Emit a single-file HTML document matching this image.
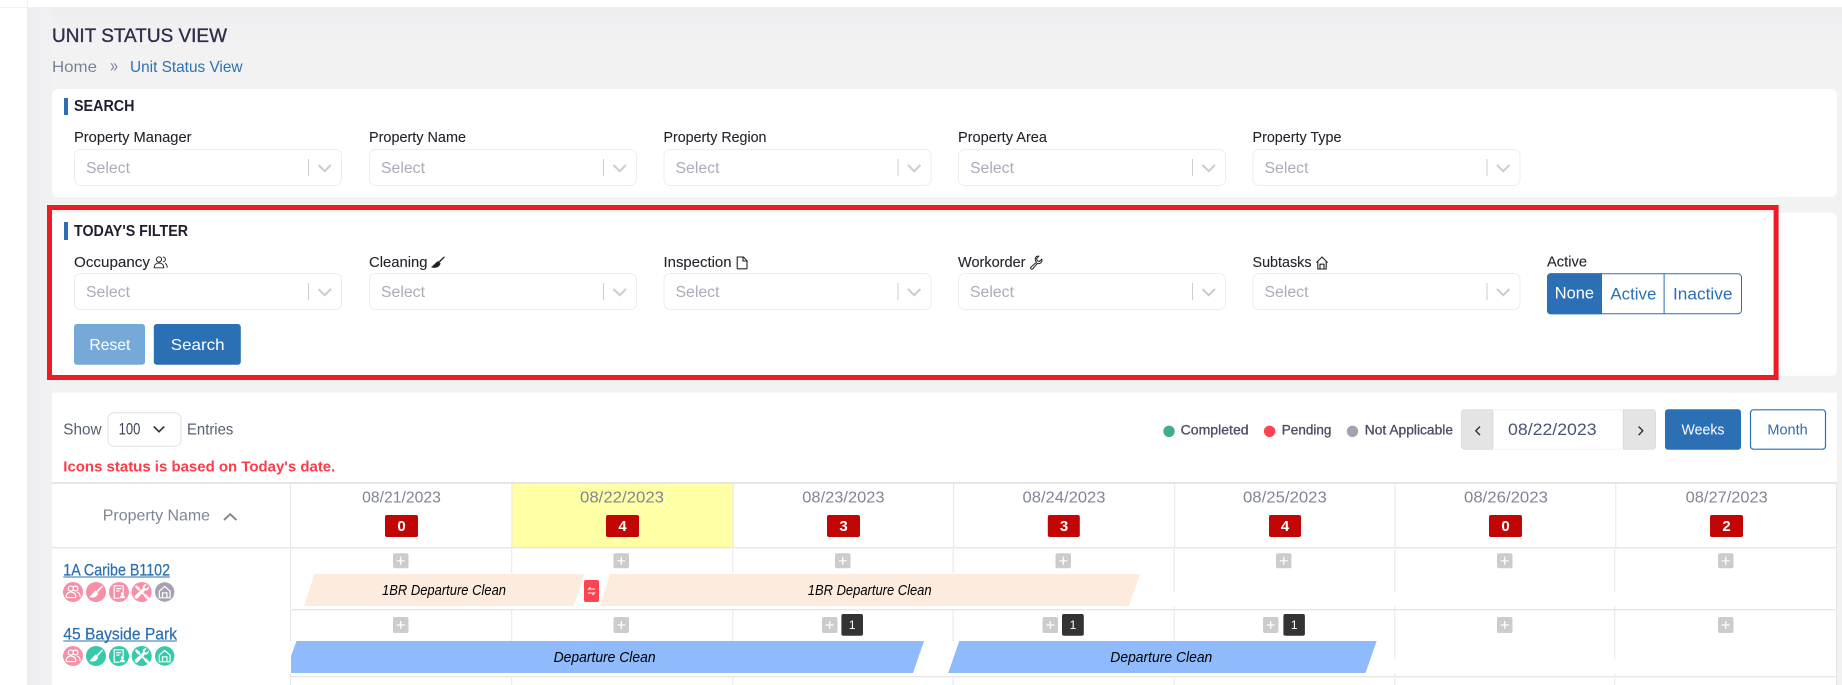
<!DOCTYPE html>
<html lang="en">
<head>
<meta charset="utf-8">
<title>Unit Status View</title>
<style>
html,body{margin:0;padding:0;background:#fff;width:1842px;height:685px;overflow:hidden}
svg{display:block}
text{font-family:"Liberation Sans",sans-serif;white-space:pre}
.m{stroke-width:.35;paint-order:stroke}
.sb{font-weight:bold}
.lab{font-size:15px;fill:#23232b;stroke:#23232b;stroke-width:.1}
.ph{font-size:15.5px;fill:#aeaabb}
.date{font-size:15.5px;fill:#7f8596}
.bd{font-size:15px;fill:#fff;font-weight:bold;text-anchor:middle}
.ev{font-size:14.5px;font-style:italic;fill:#000}
.lg{font-size:13.5px;fill:#4b4b63;stroke:#4b4b63;stroke-width:.3}
.lk{font-size:17px;fill:#2b6fb5;stroke:#2b6fb5;stroke-width:.25}
</style>
</head>
<body>
<svg xmlns="http://www.w3.org/2000/svg" width="1842" height="685" viewBox="0 0 1842 685">
<defs>
<linearGradient id="gt" x1="0" y1="0" x2="0" y2="1"><stop offset="0" stop-color="#eeeef1"/><stop offset="1" stop-color="#f2f2f2"/></linearGradient>
<linearGradient id="gl" x1="0" y1="0" x2="1" y2="0"><stop offset="0" stop-color="#edeef2"/><stop offset="1" stop-color="#f1f1f3"/></linearGradient>
<g id="sel">
<rect x=".5" y=".5" width="267" height="36" rx="6" fill="#fff" stroke="#eceDf3"/>
<rect x="234" y="10" width="1" height="17" fill="#ccc"/>
<path d="M244.5 16l6.2 6.2 6.2-6.2" fill="none" stroke="#ccc" stroke-width="2"/>
</g>
<g id="plus"><rect width="15.5" height="15" rx="2" fill="#ccc"/><path d="M7.75 3.5v8M3.75 7.5h8" stroke="#fff" stroke-width="1.2"/></g>
<g id="plus2"><rect width="15.5" height="16" rx="2" fill="#ccc"/><path d="M7.75 4v8M3.75 8h8" stroke="#fff" stroke-width="1.2"/></g>
<g id="i-people" fill="none" stroke="#fff" stroke-width="1.15">
<circle cx="7.8" cy="6.6" r="2.5"/><circle cx="12.6" cy="6.4" r="2.4"/>
<path d="M3 15.6c0-3.6 2.2-5.6 5-5.6s5 2 5 5.6M3 15.6h10M13.8 10c2 .4 3.4 2 3.4 5.2"/>
</g>
<g id="i-broom" fill="#fff">
<path d="M16 3.6l1 1-5.6 6-1.2-1.2z"/>
<path d="M9.8 8.6c-2.2.8-3 3.6-6.4 6.2 3.2 1.6 7.6.8 8.8-3.4z"/>
</g>
<g id="i-doc" fill="none" stroke="#fff" stroke-width="1.2">
<path d="M14.2 10V3.8H5.2v12.4h5.4"/>
<path d="M7.2 6.6h5M7.2 9h3.4"/>
<circle cx="13.4" cy="11.6" r="1.5" fill="#fff" stroke="none"/>
<path d="M10.8 16.2c0-2 1.2-3 2.6-3s2.6 1 2.6 3z" fill="#fff" stroke="none"/>
</g>
<g id="i-tools" fill="#fff">
<path d="M3.2 4.6L4.6 3.2 8 5.8 8.6 8 16.8 15 15 16.8 8 8.6 5.8 8z"/>
<path d="M12.4 14.4l2-2 3.2 3.2a1.4 1.4 0 0 1-2 2z"/>
<path d="M17 4.2l-2.4 2.4-1.4-.4-.4-1.4 2.4-2.4c-2.4-.8-4.8 1.4-4 3.8l-8 7.6a1.9 1.9 0 0 0 2.6 2.6l7.6-8c2.4.8 4.4-1.8 3.6-4.2z"/>
</g>
<g id="i-house" fill="none" stroke="#fff" stroke-width="1.2">
<path d="M4.6 9.2L10 4.4l5.4 4.8v6.6H4.6z"/><path d="M7.8 15.8v-5h4.4v5"/>
</g>
</defs>

<!-- shell -->
<rect width="1842" height="685" fill="#fff"/>
<rect x="27" y="7" width="1815" height="678" fill="#f2f2f2"/>
<rect x="27" y="7" width="1815" height="40" fill="url(#gt)"/>
<rect x="27" y="7" width="25" height="678" fill="url(#gl)"/>
<rect x="27" y="0" width="1" height="7" fill="#f0f0f0"/>
<rect x="0" y="7" width="27" height="1" fill="#f2f2f2"/>

<!-- heading -->
<text x="52" y="42" font-size="19.5" fill="#2e2e4a" stroke="#2e2e4a" class="m" textLength="175" lengthAdjust="spacingAndGlyphs">UNIT STATUS VIEW</text>
<text x="52" y="72" font-size="16" fill="#7b8398" textLength="45" lengthAdjust="spacingAndGlyphs">Home</text>
<text x="110" y="72" font-size="18" fill="#7b8398" textLength="8" lengthAdjust="spacingAndGlyphs">»</text>
<text x="130" y="72" font-size="16" fill="#2d70b5" textLength="112.5" lengthAdjust="spacingAndGlyphs">Unit Status View</text>

<!-- search card -->
<rect x="52" y="89" width="1785" height="108" rx="6" fill="#fff"/>
<rect x="64" y="98" width="4" height="17" fill="#2b6fb5"/>
<text x="74" y="111" font-size="15.5" class="sb" fill="#1e1e2e" textLength="60.5" lengthAdjust="spacingAndGlyphs">SEARCH</text>
<text x="74" y="142" class="lab" textLength="117.5" lengthAdjust="spacingAndGlyphs">Property Manager</text>
<text x="369" y="142" class="lab" textLength="97" lengthAdjust="spacingAndGlyphs">Property Name</text>
<text x="663.5" y="142" class="lab" textLength="103" lengthAdjust="spacingAndGlyphs">Property Region</text>
<text x="958" y="142" class="lab" textLength="89" lengthAdjust="spacingAndGlyphs">Property Area</text>
<text x="1252.5" y="142" class="lab" textLength="89" lengthAdjust="spacingAndGlyphs">Property Type</text>
<use href="#sel" x="74" y="149"/>
<use href="#sel" x="369" y="149"/>
<use href="#sel" x="663.5" y="149"/>
<use href="#sel" x="958" y="149"/>
<use href="#sel" x="1252.5" y="149"/>
<text x="86" y="173" class="ph" textLength="44" lengthAdjust="spacingAndGlyphs">Select</text>
<text x="381" y="173" class="ph" textLength="44" lengthAdjust="spacingAndGlyphs">Select</text>
<text x="675.5" y="173" class="ph" textLength="44" lengthAdjust="spacingAndGlyphs">Select</text>
<text x="970" y="173" class="ph" textLength="44" lengthAdjust="spacingAndGlyphs">Select</text>
<text x="1264.5" y="173" class="ph" textLength="44" lengthAdjust="spacingAndGlyphs">Select</text>

<!-- filter card -->
<rect x="52" y="212.7" width="1785" height="163" rx="6" fill="#fff"/>
<rect x="64" y="222" width="4" height="18" fill="#2b6fb5"/>
<text x="74" y="236" font-size="15.5" class="sb" fill="#1e1e2e" textLength="114" lengthAdjust="spacingAndGlyphs">TODAY'S FILTER</text>

<text x="74" y="267" class="lab" textLength="76" lengthAdjust="spacingAndGlyphs">Occupancy</text>
<g fill="none" stroke="#222" stroke-width=".95">
<circle cx="159" cy="259.4" r="2.6"/><path d="M163 257a2.4 2.4 0 0 1 0 4.8"/>
<path d="M154.2 267.8c0-3.2 2-4.8 4.8-4.8s4.8 1.6 4.8 4.8zM165 263.4c1.4.4 2.2 1.8 2.2 4.4"/>
</g>
<text x="369" y="267" class="lab" textLength="58.5" lengthAdjust="spacingAndGlyphs">Cleaning</text>
<g fill="#222">
<path d="M444 256.4l.8.8-4.8 5-1.2-1z"/>
<path d="M438.4 261c-2 .6-3.8 3.6-7.4 6 3.6 1.8 8.4.8 9.6-3.6z"/>
</g>
<text x="663.5" y="267" class="lab" textLength="68" lengthAdjust="spacingAndGlyphs">Inspection</text>
<path d="M737.2 257h6.2l3.6 3.8v7.4a.6.6 0 0 1-.6.6h-8.6a.6.6 0 0 1-.6-.6zM743 257.2v3.8h3.8" fill="none" stroke="#222" stroke-width="1.1"/>
<text x="958" y="267" class="lab" textLength="67.5" lengthAdjust="spacingAndGlyphs">Workorder</text>
<path d="M1036.4 262.4l-5.6 4.8a1.3 1.3 0 0 0 1.8 1.8l4.8-5.6c2.8 1 5.2-1.6 4.4-4.2l-2.4 2.2-2.2-.6-.6-2.2 2.2-2.4c-2.8-.6-4.8 2.2-2.4 6.2z" fill="none" stroke="#222" stroke-width="1"/>
<text x="1252.5" y="267" class="lab" textLength="59" lengthAdjust="spacingAndGlyphs">Subtasks</text>
<path d="M1316.4 262.6l5.6-5.6 5.6 5.6M1317.8 261.4v7.6h8.4v-7.6M1320 269v-4.8h4v4.8" fill="none" stroke="#222" stroke-width="1.1"/>
<text x="1547" y="266.5" class="lab" textLength="40" lengthAdjust="spacingAndGlyphs">Active</text>

<use href="#sel" x="74" y="273"/>
<use href="#sel" x="369" y="273"/>
<use href="#sel" x="663.5" y="273"/>
<use href="#sel" x="958" y="273"/>
<use href="#sel" x="1252.5" y="273"/>
<text x="86" y="297" class="ph" textLength="44" lengthAdjust="spacingAndGlyphs">Select</text>
<text x="381" y="297" class="ph" textLength="44" lengthAdjust="spacingAndGlyphs">Select</text>
<text x="675.5" y="297" class="ph" textLength="44" lengthAdjust="spacingAndGlyphs">Select</text>
<text x="970" y="297" class="ph" textLength="44" lengthAdjust="spacingAndGlyphs">Select</text>
<text x="1264.5" y="297" class="ph" textLength="44" lengthAdjust="spacingAndGlyphs">Select</text>

<!-- active group -->
<rect x="1547.5" y="273.8" width="194" height="40" rx="3.5" fill="#fff" stroke="#2b6fb5"/>
<path d="M1550.5 273.3H1602v41h-51.5a3.5 3.5 0 0 1-3.5-3.5v-34a3.5 3.5 0 0 1 3.5-3.5z" fill="#2b6fb5"/>
<rect x="1663.6" y="273.5" width="1" height="40.5" fill="#2b6fb5"/>
<text x="1554.8" y="298.5" font-size="16.5" fill="#fff" textLength="39.2" lengthAdjust="spacingAndGlyphs">None</text>
<text x="1610.4" y="299.5" font-size="16.5" fill="#2b6fb5" textLength="46" lengthAdjust="spacingAndGlyphs">Active</text>
<text x="1673" y="299.5" font-size="16.5" fill="#2b6fb5" textLength="59.5" lengthAdjust="spacingAndGlyphs">Inactive</text>

<!-- buttons -->
<rect x="74" y="324" width="71" height="40.7" rx="3" fill="#74a9d8"/>
<text x="89.4" y="350" font-size="16" fill="#fff" textLength="41" lengthAdjust="spacingAndGlyphs">Reset</text>
<rect x="153.8" y="324" width="87" height="40.7" rx="3" fill="#2b6fb5"/>
<text x="170.8" y="350" font-size="16" fill="#fff" textLength="53.8" lengthAdjust="spacingAndGlyphs">Search</text>

<!-- red highlight -->
<rect x="49.5" y="207.5" width="1726.6" height="170" fill="none" stroke="#ed1c24" stroke-width="5"/>

<!-- table card -->
<rect x="52" y="392.7" width="1785" height="293" fill="#fff"/>

<text x="63.3" y="434.3" font-size="16" fill="#565e70" textLength="38.3" lengthAdjust="spacingAndGlyphs">Show</text>
<rect x="108" y="412.8" width="73" height="33.4" rx="6" fill="#fff" stroke="#dedfe3"/>
<text x="118.6" y="434.5" font-size="16.5" fill="#3c4357" textLength="21.8" lengthAdjust="spacingAndGlyphs">100</text>
<path d="M153.8 426.5l5.2 5.2 5.2-5.2" fill="none" stroke="#333" stroke-width="1.6"/>
<text x="187" y="434.3" font-size="16" fill="#565e70" textLength="46.3" lengthAdjust="spacingAndGlyphs">Entries</text>
<text x="63.3" y="471.3" font-size="15" class="sb" fill="#ff3b47" textLength="272" lengthAdjust="spacingAndGlyphs">Icons status is based on Today's date.</text>

<!-- legend & date nav -->
<circle cx="1169" cy="431.3" r="5.7" fill="#3fae8e"/>
<text x="1180.6" y="434.3" class="lg" textLength="68" lengthAdjust="spacingAndGlyphs">Completed</text>
<circle cx="1269.6" cy="431.3" r="5.7" fill="#ff4350"/>
<text x="1281.8" y="434.3" class="lg" textLength="49.6" lengthAdjust="spacingAndGlyphs">Pending</text>
<circle cx="1352.5" cy="431.3" r="5.7" fill="#a5a1b1"/>
<text x="1364.8" y="434.3" class="lg" textLength="88.2" lengthAdjust="spacingAndGlyphs">Not Applicable</text>

<path d="M1464.5 409.8h28v39.4h-28a3 3 0 0 1-3-3v-33.4a3 3 0 0 1 3-3z" fill="#e4e4e4" stroke="#dcdcdc"/>
<rect x="1493.5" y="409.8" width="129.5" height="39.4" rx="3" fill="#fff" stroke="#f0f0f0"/>
<path d="M1623.5 409.8h29a3 3 0 0 1 3 3v33.4a3 3 0 0 1-3 3h-29z" fill="#e4e4e4" stroke="#dcdcdc"/>
<path d="M1480 426.5l-4.2 4.3 4.2 4.3" fill="none" stroke="#333" stroke-width="1.4"/>
<path d="M1638.6 426.5l4.2 4.3-4.2 4.3" fill="none" stroke="#333" stroke-width="1.4"/>
<text x="1508" y="435" font-size="17" fill="#4a5572" textLength="88.6" lengthAdjust="spacingAndGlyphs">08/22/2023</text>
<rect x="1665" y="409.3" width="76" height="40.4" rx="3" fill="#2b6fb5"/>
<text x="1681.5" y="434.3" font-size="14.5" fill="#fff" class="m" textLength="43" lengthAdjust="spacingAndGlyphs">Weeks</text>
<rect x="1750.5" y="409.8" width="75" height="39.4" rx="3" fill="#fff" stroke="#2b6fb5" stroke-width="1.2"/>
<text x="1767.4" y="434.3" font-size="14.5" fill="#2b6fb5" textLength="40.3" lengthAdjust="spacingAndGlyphs">Month</text>

<!-- table header -->
<rect x="52" y="482" width="1785" height="2" fill="#e6e6e6"/>
<rect x="512" y="484" width="220.5" height="63" fill="#ffffa5"/>
<g fill="#e6e6e6">
<rect x="290" y="484" width="1" height="63"/>
<rect x="511.4" y="484" width="1" height="63"/>
<rect x="732.6" y="484" width="1" height="63"/>
<rect x="953.2" y="484" width="1" height="63"/>
<rect x="1174.2" y="484" width="1" height="63"/>
<rect x="1394.6" y="484" width="1" height="63"/>
<rect x="1615.3" y="484" width="1" height="63"/>
<rect x="1836" y="484" width="1" height="201"/>
<rect x="52" y="547" width="1785" height="1.4"/>
<rect x="291" y="609" width="1546" height="1.4"/>
<rect x="291" y="676" width="1546" height="1.4"/>
<!-- row verticals -->
<rect x="290" y="549" width="1" height="60"/><rect x="290" y="610" width="1" height="32"/><rect x="290" y="674" width="1" height="11"/>
<rect x="511.2" y="549" width="1" height="24"/><rect x="511.2" y="610" width="1" height="31"/><rect x="511.2" y="678" width="1" height="7"/>
<rect x="732.3" y="549" width="1" height="24"/><rect x="732.3" y="610" width="1" height="31"/><rect x="732.3" y="678" width="1" height="7"/>
<rect x="952.6" y="549" width="1" height="24"/><rect x="952.6" y="610" width="1" height="31"/><rect x="952.6" y="678" width="1" height="7"/>
<rect x="1173.6" y="549" width="1" height="43.5"/><rect x="1173.6" y="606.5" width="1" height="2.5"/><rect x="1173.6" y="610" width="1" height="31"/><rect x="1173.6" y="678" width="1" height="7"/>
<rect x="1394.3" y="549" width="1" height="43.5"/><rect x="1394.3" y="606.5" width="1" height="2.5"/><rect x="1394.3" y="610" width="1" height="49.5"/><rect x="1394.3" y="673.5" width="1" height="2.5"/><rect x="1394.3" y="678" width="1" height="7"/>
<rect x="1614.3" y="549" width="1" height="43.5"/><rect x="1614.3" y="606.5" width="1" height="2.5"/><rect x="1614.3" y="610" width="1" height="49.5"/><rect x="1614.3" y="673.5" width="1" height="2.5"/><rect x="1614.3" y="678" width="1" height="7"/>
</g>

<text x="102.8" y="520.3" font-size="16" fill="#7f8596" textLength="107.2" lengthAdjust="spacingAndGlyphs">Property Name</text>
<path d="M224 520l6.2-5.8 6.2 5.8" fill="none" stroke="#7f8596" stroke-width="1.9"/>

<text x="362.2" y="502.3" class="date" textLength="78.7" lengthAdjust="spacingAndGlyphs">08/21/2023</text>
<text x="580" y="502.3" class="date" textLength="84" lengthAdjust="spacingAndGlyphs">08/22/2023</text>
<text x="802.3" y="502.3" class="date" textLength="82.2" lengthAdjust="spacingAndGlyphs">08/23/2023</text>
<text x="1022.5" y="502.3" class="date" textLength="83" lengthAdjust="spacingAndGlyphs">08/24/2023</text>
<text x="1243" y="502.3" class="date" textLength="83.8" lengthAdjust="spacingAndGlyphs">08/25/2023</text>
<text x="1464" y="502.3" class="date" textLength="83.9" lengthAdjust="spacingAndGlyphs">08/26/2023</text>
<text x="1685.7" y="502.3" class="date" textLength="82.1" lengthAdjust="spacingAndGlyphs">08/27/2023</text>

<g fill="#c20606">
<rect x="385" y="515" width="33" height="22" rx="2"/>
<rect x="606" y="515" width="33" height="22" rx="2"/>
<rect x="827" y="515" width="33" height="22" rx="2"/>
<rect x="1047.8" y="515" width="32" height="22" rx="2"/>
<rect x="1269" y="515" width="32" height="22" rx="2"/>
<rect x="1489" y="515" width="33" height="22" rx="2"/>
<rect x="1710" y="515" width="33" height="22" rx="2"/>
</g>
<text x="401.5" y="531" class="bd">0</text>
<text x="622.5" y="531" class="bd">4</text>
<text x="843.5" y="531" class="bd">3</text>
<text x="1064" y="531" class="bd">3</text>
<text x="1285" y="531" class="bd">4</text>
<text x="1505.5" y="531" class="bd">0</text>
<text x="1726.5" y="531" class="bd">2</text>

<!-- row names -->
<text x="63.3" y="575.3" class="lk" textLength="106.7" lengthAdjust="spacingAndGlyphs">1A Caribe B1102</text>
<rect x="63.3" y="576.5" width="106.7" height="1" fill="#2b6fb5"/>
<text x="63.3" y="639.3" class="lk" textLength="113.7" lengthAdjust="spacingAndGlyphs">45 Bayside Park</text>
<rect x="63.3" y="640.5" width="113.7" height="1" fill="#2b6fb5"/>

<circle cx="73" cy="592" r="10" fill="#f78fa7"/><use href="#i-people" x="63" y="582"/>
<circle cx="96" cy="592" r="10" fill="#f78fa7"/><use href="#i-broom" x="86" y="582"/>
<circle cx="119" cy="592" r="10" fill="#f78fa7"/><use href="#i-doc" x="109" y="582"/>
<circle cx="141.7" cy="592" r="10" fill="#f78fa7"/><use href="#i-tools" x="131.7" y="582"/>
<circle cx="164.7" cy="592" r="9.7" fill="#a5a1b1"/><use href="#i-house" x="154.7" y="582"/>

<circle cx="73" cy="656" r="10" fill="#f78fa7"/><use href="#i-people" x="63" y="646"/>
<circle cx="96" cy="656" r="10" fill="#38c9ab"/><use href="#i-broom" x="86" y="646"/>
<circle cx="119" cy="656" r="10" fill="#38c9ab"/><use href="#i-doc" x="109" y="646"/>
<circle cx="141.7" cy="656" r="10" fill="#38c9ab"/><use href="#i-tools" x="131.7" y="646"/>
<circle cx="164.7" cy="656" r="9.7" fill="#38c9ab"/><use href="#i-house" x="154.7" y="646"/>

<!-- plus buttons -->
<use href="#plus" x="393" y="553.3"/>
<use href="#plus" x="613.5" y="553.3"/>
<use href="#plus" x="835" y="553.3"/>
<use href="#plus" x="1055.5" y="553.3"/>
<use href="#plus" x="1276" y="553.3"/>
<use href="#plus" x="1497" y="553.3"/>
<use href="#plus" x="1718" y="553.3"/>
<use href="#plus2" x="393" y="617"/>
<use href="#plus2" x="613.5" y="617"/>
<use href="#plus2" x="822" y="617"/>
<use href="#plus2" x="1042.5" y="617"/>
<use href="#plus2" x="1263" y="617"/>
<use href="#plus2" x="1497" y="617"/>
<use href="#plus2" x="1718" y="617"/>

<g fill="#333">
<rect x="841.4" y="614" width="21.6" height="21.7" rx="2"/>
<rect x="1062" y="614" width="21.8" height="21.7" rx="2"/>
<rect x="1283.4" y="614" width="21.5" height="21.7" rx="2"/>
</g>
<g font-size="12" fill="#fff" text-anchor="middle">
<text x="852.2" y="629">1</text>
<text x="1073" y="629">1</text>
<text x="1294.2" y="629">1</text>
</g>

<!-- events -->
<polygon points="314.4,574 584.4,574 573.8,606 304,606" fill="#fdebdd"/>
<text x="382" y="594.8" class="ev" textLength="124" lengthAdjust="spacingAndGlyphs">1BR Departure Clean</text>
<rect x="584" y="580" width="15" height="22" rx="2" fill="#ff4350"/>
<path d="M595 589h-6.5l2-2M588 593h6.5l-2 2" fill="none" stroke="#fff" stroke-width="1"/>
<polygon points="610,574 1140,574 1129,606 600,606" fill="#fdebdd"/>
<text x="807.8" y="594.8" class="ev" textLength="123.8" lengthAdjust="spacingAndGlyphs">1BR Departure Clean</text>

<polygon points="296.6,641 924,641 913,673 291,673 291,656" fill="#8fbafc"/>
<text x="553.6" y="662" class="ev" textLength="102" lengthAdjust="spacingAndGlyphs">Departure Clean</text>
<polygon points="959.3,641 1376.7,641 1365.5,673 948.2,673" fill="#8fbafc"/>
<text x="1110.3" y="662" class="ev" textLength="102" lengthAdjust="spacingAndGlyphs">Departure Clean</text>
</svg>
</body>
</html>
